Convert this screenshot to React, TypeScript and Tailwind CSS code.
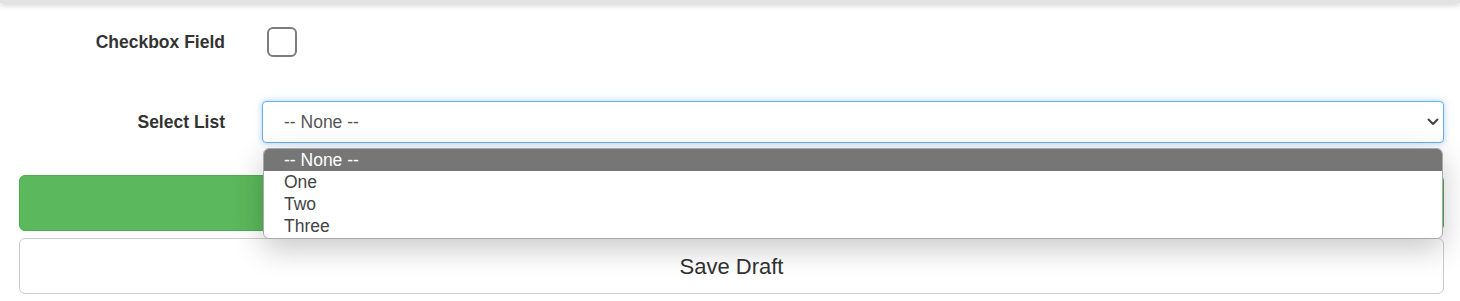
import React from "react";

const options = ["-- None --", "One", "Two", "Three"];

function Chevron() {
  return (
    <svg width="12" height="8" viewBox="0 0 12 8" className="text-[#444]">
      <path d="M1.5 1.5 L6 6 L10.5 1.5" fill="none" stroke="currentColor" strokeWidth="2" strokeLinecap="round" strokeLinejoin="round" />
    </svg>
  );
}

export default function App() {
  return (
    <div className="relative h-[301px] w-full overflow-hidden bg-white font-['Liberation_Sans',Arial,sans-serif] text-[#333]">
      <div className="h-[3px] bg-[#e2e2e2] shadow-[0_1px_6px_rgba(0,0,0,0.35)]" />

      <div className="pl-[19px] pr-[16px] pt-[21px]">
        <div className="flex h-[36px] items-center">
          <label className="w-[243px] pr-[37px] text-right text-[17.5px] font-bold">Checkbox Field</label>
          <span className="ml-[5px] block h-[30px] w-[30px] rounded-[6px] border-[2.5px] border-[#7c7c7c]" />
        </div>

        <div className="mt-[41px] flex h-[42px] items-center">
          <label className="w-[243px] pr-[37px] text-right text-[17.5px] font-bold">Select List</label>
          <div className="relative h-full flex-1">
            <div className="flex h-full items-center justify-between rounded-[4px] border border-[#66afe9] bg-white pl-[21px] pr-[4px] text-[17.5px] text-[#555] shadow-[0_0_7px_rgba(102,175,233,0.55)]">
              <span>-- None --</span>
              <Chevron />
            </div>
            <div className="absolute left-[1px] right-[1px] top-[47px] z-10 rounded-[6px] border border-[#a9a9a9] bg-white pb-[1px] text-[17.5px] text-[#444] shadow-[0_10px_30px_rgba(0,0,0,0.22)]">
              {options.map((o, i) => (
                <div
                  key={o}
                  className={`h-[22px] pl-[20px] leading-[22px] ${i === 0 ? "rounded-t-[5px] bg-[#767676] text-white" : ""}`}
                >
                  {o}
                </div>
              ))}
            </div>
          </div>
        </div>

        <div className="mt-[32px] flex flex-col gap-[7px]">
          <div className="h-[56px] rounded-[6px] border border-[#4cae4c] bg-[#5cb85c]" />
          <button className="h-[56px] rounded-[6px] border border-[#ccc] bg-white text-[22px] text-[#333]">Save Draft</button>
        </div>
      </div>
    </div>
  );
}
